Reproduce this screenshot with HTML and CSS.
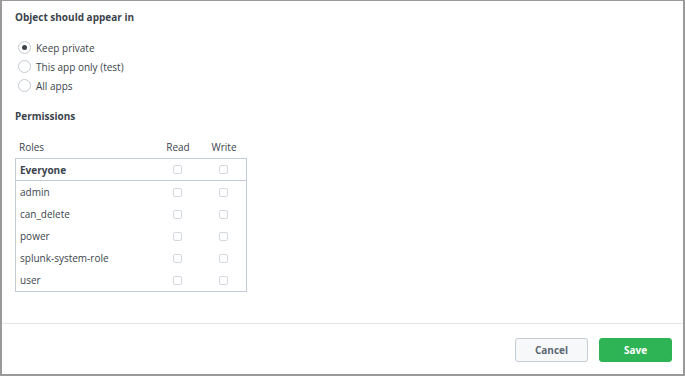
FILE: index.html
```html
<!DOCTYPE html>
<html lang="en">
<head>
  <meta charset="UTF-8" />
  <title>Edit Permissions</title>
<link rel="stylesheet" href="styles.css">
</head>
<body>
  <div class="dialog">
    <div class="dialog-body">
      <h4>Object should appear in</h4>
      <div class="radios">
        <label class="radio"><span class="dot checked"></span>Keep private</label>
        <label class="radio"><span class="dot"></span>This app only (test)</label>
        <label class="radio"><span class="dot"></span>All apps</label>
      </div>

      <h4 class="perm-title">Permissions</h4>
      <div class="perm-head">
        <span class="role">Roles</span>
        <span class="col">Read</span>
        <span class="col">Write</span>
      </div>
      <div class="perm-table">
        <div class="perm-row first">
          <span class="role"><b>Everyone</b></span>
          <span class="col"><i class="box"></i></span>
          <span class="col"><i class="box"></i></span>
        </div>
        <div class="perm-row">
          <span class="role">admin</span>
          <span class="col"><i class="box"></i></span>
          <span class="col"><i class="box"></i></span>
        </div>
        <div class="perm-row">
          <span class="role">can_delete</span>
          <span class="col"><i class="box"></i></span>
          <span class="col"><i class="box"></i></span>
        </div>
        <div class="perm-row">
          <span class="role">power</span>
          <span class="col"><i class="box"></i></span>
          <span class="col"><i class="box"></i></span>
        </div>
        <div class="perm-row">
          <span class="role">splunk-system-role</span>
          <span class="col"><i class="box"></i></span>
          <span class="col"><i class="box"></i></span>
        </div>
        <div class="perm-row">
          <span class="role">user</span>
          <span class="col"><i class="box"></i></span>
          <span class="col"><i class="box"></i></span>
        </div>
      </div>
    </div>
    <div class="dialog-footer">
      <button class="btn cancel">Cancel</button>
      <button class="btn save">Save</button>
    </div>
  </div>
</body>
</html>
```

FILE: styles.css
```css
* {
  box-sizing: border-box;
}

body {
  margin: 0;
  font-family: 'Open Sans', 'Liberation Sans', sans-serif;
  font-size: 10px;
  color: #3c444d;
  background: #fff;
}

.dialog {
  width: 685px;
  height: 376px;
  border: 2px solid #9a9a9a;
  border-top-width: 1px;
  display: flex;
  flex-direction: column;
}

.dialog-body {
  flex: 1;
  padding: 9px 0 0 13px;
}

h4 {
  margin: 0;
  font-size: 10px;
  font-weight: 700;
  line-height: 14px;
}

/* Radios */
.radios {
  margin-top: 14px;
  padding-left: 3px;
}

.radio {
  display: flex;
  align-items: center;
  height: 19px;
}

.dot {
  width: 13px;
  height: 13px;
  border: 1px solid #c3cbd4;
  border-radius: 50%;
  margin-right: 5px;
  display: flex;
  align-items: center;
  justify-content: center;
  background: #fff;
}

.dot.checked::after {
  content: "";
  width: 5px;
  height: 5px;
  border-radius: 50%;
  background: #3c444d;
}

/* Permissions */
.perm-title {
  margin-top: 14px;
}

.perm-head,
.perm-row {
  display: flex;
  align-items: center;
  width: 232px;
}

.perm-head {
  margin-top: 16px;
  height: 16px;
}

.role {
  flex: 1;
  padding-left: 4px;
}

.col {
  width: 46px;
  display: flex;
  justify-content: center;
}

.perm-table {
  margin-top: 3px;
  width: 232px;
  border: 1px solid #c3cbd4;
}

.perm-row {
  height: 22px;
  width: 230px;
}

.perm-row.first {
  border-bottom: 1px solid #c3cbd4;
}

.box {
  width: 9px;
  height: 9px;
  border: 1px solid #d4d9df;
  border-radius: 2px;
}

/* Footer */
.dialog-footer {
  border-top: 1px solid #e1e6eb;
  height: 51px;
  display: flex;
  justify-content: flex-end;
  align-items: flex-start;
  padding: 14px 11px 0 0;
  gap: 11px;
}

.btn {
  width: 73px;
  height: 24px;
  border-radius: 3px;
  font-family: inherit;
  font-size: 10px;
  font-weight: 700;
}

.cancel {
  background: #f7f8fa;
  border: 1px solid #c3cbd4;
  color: #5c6773;
}

.save {
  background: #2fb455;
  border: 1px solid #2fb455;
  color: #fff;
}
```
